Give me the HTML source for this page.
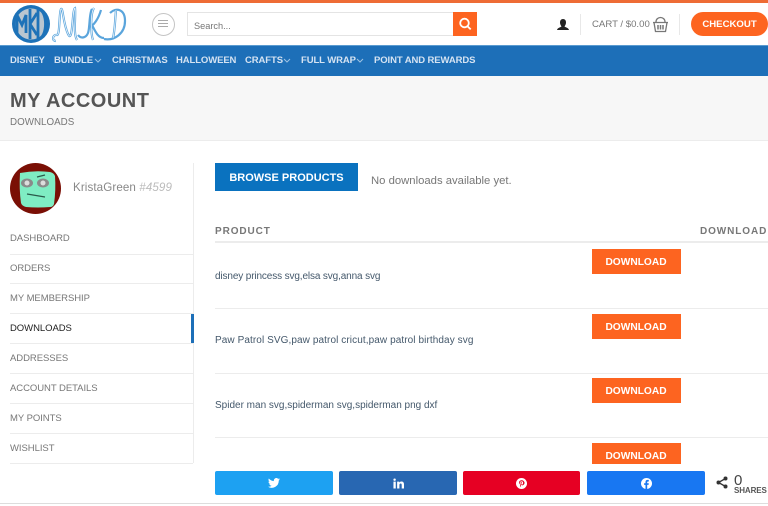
<!DOCTYPE html>
<html><head><meta charset="utf-8"><style>
html,body{margin:0;padding:0}
body{width:768px;height:506px;position:relative;overflow:hidden;background:#fff;font-family:"Liberation Sans",sans-serif}
.a{position:absolute;white-space:nowrap}
.nav{top:54px;font-size:9.5px;font-weight:bold;color:#d5e3f2;line-height:13px;letter-spacing:-.1px}
.side{left:10px;font-size:9.5px;color:#777;line-height:13px;letter-spacing:-.05px}
.ln{position:absolute;left:10px;width:183px;height:1px;background:#ececec}
.dl{left:592px;width:89px;height:25px;background:#fd6420;color:#fff;font-size:10.2px;font-weight:bold;line-height:28px;text-align:center;padding-right:1px;box-sizing:border-box}
.prod{left:215px;font-size:10px;color:#44586b;line-height:13px}
.rl{position:absolute;left:215px;width:553px;height:1px;background:#ececec}
.sh{top:471px;height:24px;border-radius:2px;display:flex;align-items:center;justify-content:center}
</style></head><body>
<div class="a" style="left:0;top:0;width:768px;height:3px;background:#ee6c35"></div>

<svg class="a" style="left:10px;top:3px" width="122" height="42" viewBox="0 0 122 42">
<circle cx="21" cy="21" r="19" fill="#1d72b8"/><circle cx="21" cy="21" r="15.500" fill="#b9c6d0"/>
<g fill="none" stroke="#1d72b8" stroke-width="2.800"><path d="M7 30V12l5 10 4-10v18"/><path d="M20 6v30M20 21l7-11M20 21l7 11"/><path d="M28 6v30c10-1 10-29 0-30z"/></g>
<g fill="none" stroke="#5ba5dc" stroke-width="2.200"><path d="M46 38c-5 0-3-7 1-6 3 1 2-24 4-26s2 14 7 25 4-25 7-26c1 8-2 26 2 32"/><path d="M68 32c3 4 8 3 10-2s1-20 4-24"/><path d="M84 5c-4 6-3 27-1 32M78 24c6 0 11-10 13-17M82 22c3 6 6 13 12 13"/><path d="M100 10c6-6 15-4 15 8s-10 20-21 18M106 7c-1 10-1 20-3 28"/></g>
<g fill="none" stroke="#fff" stroke-width=".7"><path d="M46 38c-5 0-3-7 1-6 3 1 2-24 4-26s2 14 7 25 4-25 7-26c1 8-2 26 2 32"/><path d="M84 5c-4 6-3 27-1 32M106 7c-1 10-1 20-3 28"/></g>
</svg>

<div class="a" style="left:152px;top:13px;width:21px;height:21px;border:1px solid #c4c4c4;border-radius:50%"></div>
<div class="a" style="left:158px;top:20px;width:10px;height:1px;background:#aaa;box-shadow:0 3px 0 #aaa,0 6px 0 #aaa"></div>

<div class="a" style="left:187px;top:12px;width:265px;height:22px;border:1px solid #e4e4e4;border-right:0;box-sizing:content-box"></div>
<div class="a" style="left:194px;top:20px;font-size:9.2px;color:#777;line-height:12px">Search...</div>
<div class="a" style="left:453px;top:12px;width:24px;height:24px;background:#fd6420"></div>
<svg class="a" style="left:453px;top:12px" width="24" height="24" viewBox="0 0 24 24" fill="none" stroke="#fff" stroke-width="1.800"><circle cx="11.500" cy="11" r="4.300"/><path d="M14.500 14.200l3.200 3.200"/></svg>

<svg class="a" style="left:556px;top:18px" width="14" height="14" viewBox="0 0 14 14" fill="#222"><path d="M7 1c2 0 3 1.500 3 3.500S9 7.500 8.500 8.500c1 .8 4 1.300 4.500 3.500H1c.5-2.200 3.500-2.700 4.500-3.500C5 7.500 4 6.500 4 4.500S5 1 7 1z"/></svg>
<div class="a" style="left:580px;top:14px;width:1px;height:21px;background:#e8e8e8"></div>
<div class="a" style="left:592px;top:18px;font-size:9.6px;color:#777;line-height:13px">CART / $0.00</div>
<svg class="a" style="left:652px;top:16px" width="17" height="17" viewBox="0 0 17 17" fill="none" stroke="#777" stroke-width="1.300"><path d="M4 6c0-6 9-6 9 0"/><path d="M1 6.500h15M2 6.500l1.500 9h10l1.500-9"/><path d="M6 9v4.500M8.500 9v4.500M11 9v4.500" stroke-width="1.500"/></svg>
<div class="a" style="left:679px;top:14px;width:1px;height:21px;background:#e8e8e8"></div>
<div class="a" style="left:691px;top:12px;width:77px;height:24px;border-radius:12px;background:#fd6420;color:#fff;font-size:9.6px;font-weight:bold;line-height:25px;text-align:center">CHECKOUT</div>

<div class="a" style="left:0;top:45px;width:768px;height:31px;background:#1d6fb8;border-top:1px solid #5a9bd0;box-sizing:border-box"></div>
<div class="a nav" style="left:10px">DISNEY</div>
<div class="a nav" style="left:54px">BUNDLE</div>
<svg class="a" style="left:94px;top:58px" width="8" height="5" fill="none" stroke="#9fc3e3"><path d="M1 1l3 3 3-3"/></svg>
<div class="a nav" style="left:112px">CHRISTMAS</div>
<div class="a nav" style="left:176px">HALLOWEEN</div>
<div class="a nav" style="left:245px">CRAFTS</div>
<svg class="a" style="left:283px;top:58px" width="8" height="5" fill="none" stroke="#9fc3e3"><path d="M1 1l3 3 3-3"/></svg>
<div class="a nav" style="left:301px">FULL WRAP</div>
<svg class="a" style="left:356px;top:58px" width="8" height="5" fill="none" stroke="#9fc3e3"><path d="M1 1l3 3 3-3"/></svg>
<div class="a nav" style="left:374px">POINT AND REWARDS</div>

<div class="a" style="left:0;top:76px;width:768px;height:65px;background:#f7f7f7;border-bottom:1px solid #ececec;box-sizing:border-box"></div>
<div class="a" style="left:10px;top:90px;font-size:20px;font-weight:bold;color:#555;line-height:22px;letter-spacing:.5px">MY ACCOUNT</div>
<div class="a" style="left:10px;top:116px;font-size:9.8px;color:#777;line-height:13px">DOWNLOADS</div>

<svg class="a" style="left:10px;top:163px" width="51" height="51" viewBox="0 0 51 51">
<circle cx="25.500" cy="25.500" r="25.500" fill="#7a0f05"/>
<path d="M10 10q15-3 30-1 4 1 5 4 1 14-1 28-1 3-4 3-12 1-24 0-4-1-5-4-2-14-1-30z" fill="#7fedc3"/>
<ellipse cx="17" cy="20" rx="6" ry="4.500" fill="#8a8a8a"/><ellipse cx="33" cy="20" rx="6" ry="4.500" fill="#8a8a8a"/>
<circle cx="17" cy="20" r="2.500" fill="#ddd"/><circle cx="33" cy="20" r="2.500" fill="#ddd"/>
<path d="M27 14l8-2M17 31l18 3" stroke="#2a5a4a" stroke-width="1.200"/>
</svg>
<div class="a" style="left:73px;top:181px;font-size:11.6px;color:#888;line-height:13px;letter-spacing:.1px">KristaGreen <i style="color:#bbb">#4599</i></div>
<div class="a" style="left:193px;top:163px;width:1px;height:300px;background:#ececec"></div>

<div class="a side" style="top:232px">DASHBOARD</div><div class="ln" style="top:254px"></div>
<div class="a side" style="top:262px">ORDERS</div><div class="ln" style="top:283px"></div>
<div class="a side" style="top:292px">MY MEMBERSHIP</div><div class="ln" style="top:313px"></div>
<div class="a side" style="top:322px;color:#222">DOWNLOADS</div><div class="ln" style="top:343px"></div>
<div class="a" style="left:191px;top:314px;width:3px;height:29px;background:#1d6fb8"></div>
<div class="a side" style="top:352px">ADDRESSES</div><div class="ln" style="top:373px"></div>
<div class="a side" style="top:382px">ACCOUNT DETAILS</div><div class="ln" style="top:403px"></div>
<div class="a side" style="top:412px">MY POINTS</div><div class="ln" style="top:433px"></div>
<div class="a side" style="top:442px">WISHLIST</div><div class="ln" style="top:463px"></div>

<div class="a" style="left:215px;top:163px;width:143px;height:28px;background:#0a72bf;color:#fff;font-size:11px;font-weight:bold;line-height:30px;text-align:center">BROWSE PRODUCTS</div>
<div class="a" style="left:371px;top:174px;font-size:11.3px;color:#777;line-height:14px">No downloads available yet.</div>

<div class="a" style="left:215px;top:225px;font-size:10px;font-weight:bold;color:#777;line-height:13px;letter-spacing:.9px">PRODUCT</div>
<div class="a" style="left:700px;top:225px;font-size:10px;font-weight:bold;color:#777;line-height:13px;letter-spacing:.9px">DOWNLOAD</div>
<div class="rl" style="top:241px;height:2px"></div>

<div class="a dl" style="top:249px">DOWNLOAD</div>
<div class="a prod" style="top:270px;letter-spacing:-.13px">disney princess svg,elsa svg,anna svg</div>
<div class="rl" style="top:308px"></div>
<div class="a dl" style="top:314px">DOWNLOAD</div>
<div class="a prod" style="top:334px;letter-spacing:.09px">Paw Patrol SVG,paw patrol cricut,paw patrol birthday svg</div>
<div class="rl" style="top:373px"></div>
<div class="a dl" style="top:378px">DOWNLOAD</div>
<div class="a prod" style="top:399px">Spider man svg,spiderman svg,spiderman png dxf</div>
<div class="rl" style="top:437px"></div>
<div class="a dl" style="top:443px;height:21px;overflow:hidden">DOWNLOAD</div>

<div class="a sh" style="left:215px;width:118px;background:#1da1f2"><svg width="12" height="10" viewBox="0 0 24 20" fill="#fff"><path d="M24 2.400a10 10 0 0 1-2.800.8A5 5 0 0 0 23.300.5a10 10 0 0 1-3.100 1.200 4.900 4.900 0 0 0-8.400 4.500A14 14 0 0 1 1.700 1a4.900 4.900 0 0 0 1.500 6.600 5 5 0 0 1-2.200-.6 4.900 4.900 0 0 0 3.900 4.900 5 5 0 0 1-2.200.1 4.900 4.900 0 0 0 4.600 3.400A10 10 0 0 1 0 17.400 14 14 0 0 0 21.500 5a10 10 0 0 0 2.500-2.600z"/></svg></div>
<div class="a sh" style="left:339px;width:118px;background:#2867b2"><svg width="11" height="11" viewBox="0 0 24 24" fill="#fff"><path d="M1 8h5v15H1zM3.500 1a2.700 2.700 0 1 1 0 5.400 2.700 2.700 0 0 1 0-5.400zM9 8h4.700v2c1-1.500 2.700-2.400 4.800-2.400 4 0 5.500 2.500 5.500 6.700V23h-5v-7.700c0-2-.6-3.200-2.300-3.200-1.800 0-2.700 1.300-2.700 3.200V23H9z"/></svg></div>
<div class="a sh" style="left:463px;width:117px;background:#e60023"><svg width="11" height="11" viewBox="0 0 24 24"><circle cx="12" cy="12" r="12" fill="#fff"/><path d="M12.500 5c-3.800 0-6 2.500-6 5.200 0 1.300.7 2.900 1.800 3.400.4.100.4-.8.200-1.300-1-2.200.5-5.300 3.800-5.300 4.500 0 3.700 7.300.8 7.300-1 0-1.700-.8-1.400-1.800l.8-2.800c.3-1.800-2.300-1.700-2.500.6 0 .7.200 1.200.2 1.200l-1.300 5.400c-.2 1-.1 2.300 0 3.300.8-.8 1.500-2.500 1.800-3.600l.5-1.800c.4.700 1.300 1.200 2.300 1.200 3 0 5.200-2.800 5.200-6.200C17.700 7 15.500 5 12.500 5z" fill="#e60023"/></svg></div>
<div class="a sh" style="left:587px;width:118px;background:#1877f2"><svg width="11" height="11" viewBox="0 0 24 24"><circle cx="12" cy="12" r="12" fill="#fff"/><path d="M13.500 24v-9h3l.5-3.500h-3.500V9.300c0-1 .4-1.800 1.900-1.800H17V4.300c-.5 0-1.500-.2-2.700-.2-2.700 0-4.500 1.700-4.500 4.700v2.700H6.800V15h3v9z" fill="#1877f2"/></svg></div>
<svg class="a" style="left:716px;top:476px" width="12" height="13" viewBox="0 0 12 13"><path d="M9.500 2.500L2.500 6.500l7 4" fill="none" stroke="#333" stroke-width="1.300"/><circle cx="9.500" cy="2.500" r="2" fill="#333"/><circle cx="2.500" cy="6.500" r="2" fill="#333"/><circle cx="9.500" cy="10.500" r="2" fill="#333"/></svg>
<div class="a" style="left:734px;top:472px;font-size:15px;color:#444;line-height:17px">0</div>
<div class="a" style="left:734px;top:486px;font-size:8px;color:#555;line-height:9px;font-weight:bold;letter-spacing:-.1px">SHARES</div>
<div class="a" style="left:0;top:503px;width:768px;height:1px;background:#ddd"></div>
</body></html>
